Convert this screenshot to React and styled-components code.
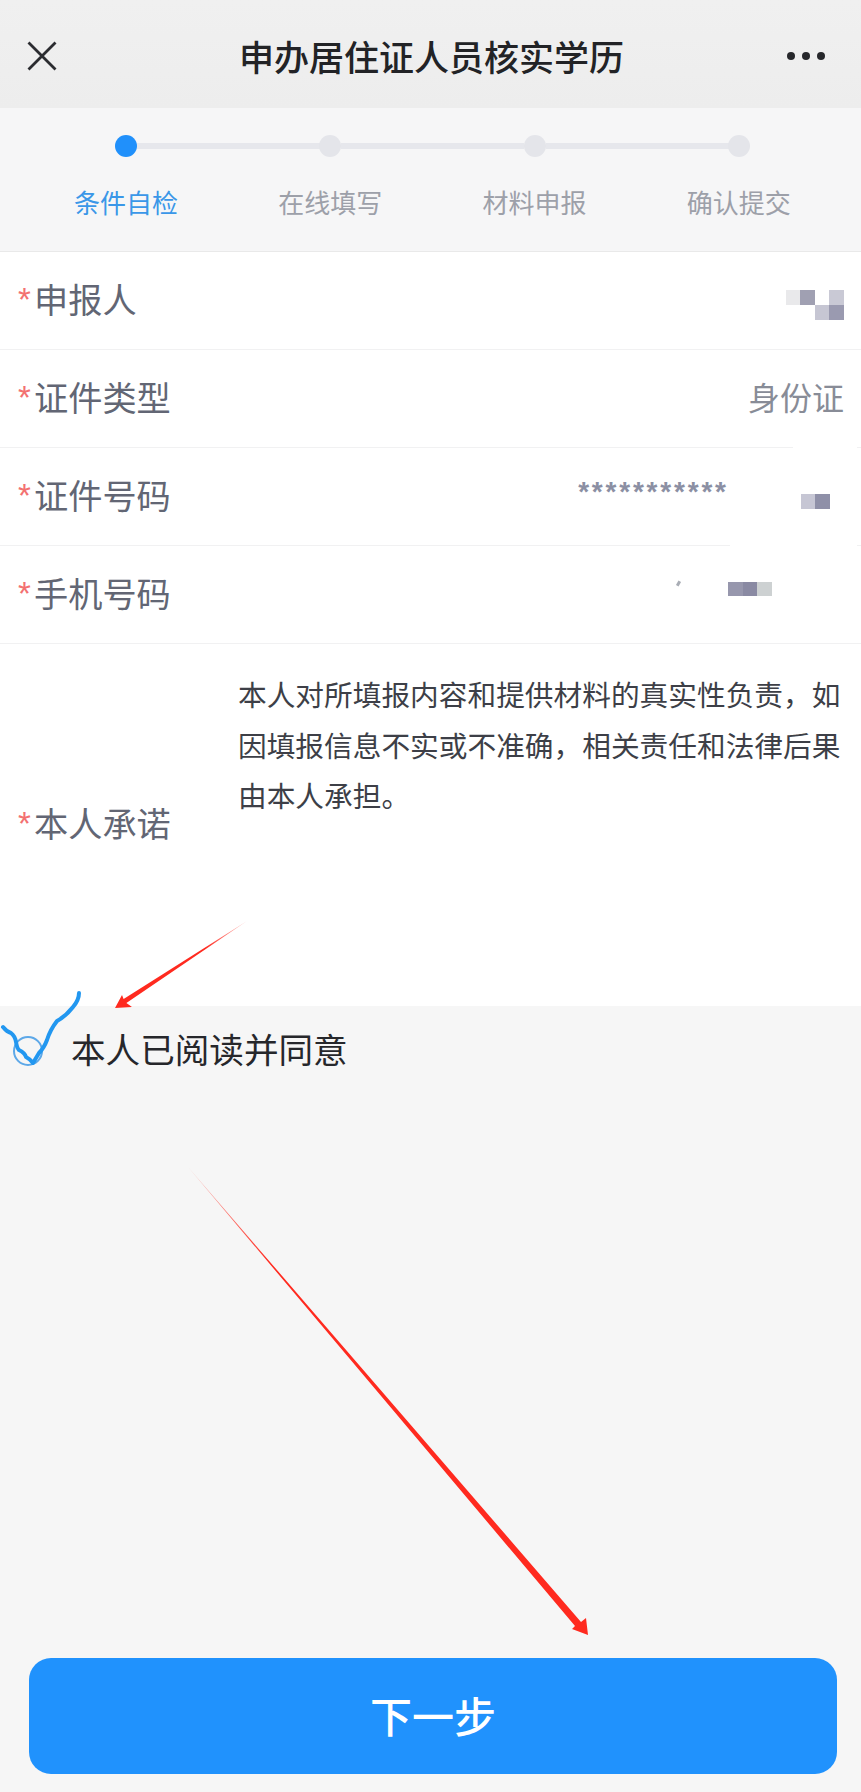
import React from 'react';
import styled, { createGlobalStyle } from 'styled-components';

const GlobalStyle = createGlobalStyle`
  html, body {
    margin: 0;
    padding: 0;
    background: #f6f6f6;
  }
  * {
    box-sizing: border-box;
  }
  body {
    font-family: "Noto Sans CJK SC", "Liberation Sans", sans-serif;
  }
`;

const Page = styled.div`
  position: relative;
  width: 861px;
  height: 1792px;
  display: flex;
  flex-direction: column;
  overflow: hidden;
  background: #f6f6f6;
`;

const Header = styled.header`
  height: 108px;
  display: flex;
  align-items: center;
  padding: 4px 36px 0 27px;
  background: linear-gradient(#f0f0f0, #ededed);
`;

const Title = styled.h1`
  margin: 0 0 1px 182px;
  font-size: 35px;
  font-weight: 500;
  line-height: 1;
  color: #222326;
`;

const MoreDots = styled.div`
  margin-left: auto;
  display: flex;
  gap: 7px;
  span {
    width: 8px;
    height: 8px;
    border-radius: 50%;
    background: #26272b;
  }
`;

const Steps = styled.section`
  height: 144px;
  padding: 27px 20px 0 24px;
  display: grid;
  grid-template-columns: repeat(4, 1fr);
  align-content: start;
  background: #f6f6f7;
  border-bottom: 1px solid #e9e9e9;
`;

const Step = styled.div`
  display: flex;
  flex-direction: column;
  align-items: center;
  gap: 27px;
  font-size: 26px;
  line-height: 36px;
  color: ${props => (props.$active ? '#3a97e8' : '#9da0a9')};
`;

const StepDot = styled.span`
  position: relative;
  width: 22px;
  height: 22px;
  border-radius: 50%;
  background: ${props => (props.$active ? '#2090fb' : '#e4e5ea')};

  /* line towards the next step */
  ${props => !props.$last && `
    &::after {
      content: '';
      position: absolute;
      left: 22px;
      top: 8px;
      width: 183px;
      height: 6px;
      background: #e6e7ec;
    }
  `}
`;

const Form = styled.section`
  background: #fff;
`;

const Row = styled.div`
  position: relative;
  height: 98px;
  display: flex;
  align-items: center;
  justify-content: space-between;
  padding: 0 17px 0 18px;
  border-bottom: 1px solid #f1f1f2;

  /* wiped part of the divider in the picture */
  ${props => props.$wipeFrom && `
    &::after {
      content: '';
      position: absolute;
      left: ${props.$wipeFrom}px;
      right: 4px;
      bottom: -1px;
      height: 1px;
      background: #fff;
    }
  `}
`;

const Label = styled.div`
  display: flex;
  align-items: center;
  margin-bottom: 6px;
  font-size: 34.2px;
  line-height: 46px;
  color: #626674;
`;

const Star = styled.span`
  width: 16px;
  font-family: "Liberation Sans", sans-serif;
  font-size: 33px;
  color: #f37171;
  transform: translateY(2px);
`;

const Value = styled.div`
  margin-bottom: 6px;
  font-size: 32px;
  color: #888c97;
`;

const MaskedValue = styled.div`
  display: flex;
  align-items: center;
  gap: ${props => props.$gap || 0}px;
  margin-right: ${props => props.$right || 0}px;
`;

const Stars = styled.span`
  margin-bottom: 10px;
  font-family: "Liberation Sans", sans-serif;
  font-size: 28px;
  font-weight: 700;
  line-height: 28px;
  letter-spacing: 2.8px;
  color: #8b8fa3;
`;

const Speck = styled.span`
  width: 3px;
  height: 5px;
  margin-bottom: 22px;
  background: #a9adb5;
  transform: rotate(30deg);
`;

const Mosaic = styled.div`
  display: grid;
  grid-template-columns: repeat(${props => props.$cols}, 14.6px);
  grid-auto-rows: 14.6px;
  margin: ${props => props.$margin || 0};
`;

const Cell = styled.span`
  background: ${props => props.$color};
`;

const PromiseRow = styled(Row)`
  height: 362px;
  border-bottom: none;
`;

const PromiseText = styled.p`
  align-self: flex-start;
  width: 606px;
  margin: 25px 0 0;
  font-size: 28.7px;
  line-height: 50.5px;
  color: #3d3f47;
`;

const AgreeRow = styled.label`
  display: flex;
  align-items: center;
  gap: 28px;
  padding: 19px 0 0 13px;
  font-size: 34.6px;
  line-height: 46px;
  color: #26272b;
`;

const Radio = styled.span`
  width: 30px;
  height: 30px;
  margin-top: 5px;
  border: 2px solid #5da8e8;
  border-radius: 50%;
`;

const NextButton = styled.button`
  height: 116px;
  margin: auto 24px 18px 29px;
  padding: 0 0 4px;
  border: none;
  border-radius: 22px;
  background: #2092fd;
  color: #fff;
  font-family: inherit;
  font-size: 42px;
  font-weight: 500;
`;

const Annotations = styled.svg`
  position: absolute;
  left: 0;
  top: 0;
  pointer-events: none;
`;

const formRows = [
  {
    label: '申报人',
    value: (
      <Mosaic $cols={4} $margin="9px 0 0 0">
        {['#e9e9eb', '#a0a0b2', '#fff', '#c9c9d5', '#fff', '#fff', '#c6c6d3', '#9a9ab0'].map((c, i) => (
          <Cell key={i} $color={c} />
        ))}
      </Mosaic>
    ),
  },
  { label: '证件类型', value: <Value>身份证</Value>, wipeFrom: 793 },
  {
    label: '证件号码',
    value: (
      <MaskedValue $gap={72} $right={14}>
        <Stars>***********</Stars>
        <Mosaic $cols={2} $margin="10px 0 0 0">
          <Cell $color="#c6c6d4" />
          <Cell $color="#8f90a8" />
        </Mosaic>
      </MaskedValue>
    ),
    wipeFrom: 730,
  },
  {
    label: '手机号码',
    value: (
      <MaskedValue $gap={48} $right={72}>
        <Speck />
        <Mosaic $cols={3} $margin="0 0 11px 0">
          <Cell $color="#9797ad" />
          <Cell $color="#8a8aa3" />
          <Cell $color="#cdd1d2" />
        </Mosaic>
      </MaskedValue>
    ),
  },
];

const steps = ['条件自检', '在线填写', '材料申报', '确认提交'];

const promiseText =
  '本人对所填报内容和提供材料的真实性负责\uFF0C如因填报信息不实或不准确\uFF0C相关责任和法律后果由本人承担。';

export default function App() {
  return (
    <Page>
      <GlobalStyle />
      <Header>
        <svg width="30" height="30" viewBox="0 0 30 30">
          <path d="M1.5 1.5 L28.5 28.5 M28.5 1.5 L1.5 28.5" stroke="#2b2c30" strokeWidth="2.8" fill="none" />
        </svg>
        <Title>申办居住证人员核实学历</Title>
        <MoreDots>
          <span />
          <span />
          <span />
        </MoreDots>
      </Header>

      <Steps>
        {steps.map((name, i) => (
          <Step key={name} $active={i === 0}>
            <StepDot $active={i === 0} $last={i === steps.length - 1} />
            {name}
          </Step>
        ))}
      </Steps>

      <Form>
        {formRows.map(row => (
          <Row key={row.label} $wipeFrom={row.wipeFrom}>
            <Label>
              <Star>*</Star>
              {row.label}
            </Label>
            {row.value}
          </Row>
        ))}
        <PromiseRow>
          <Label>
            <Star>*</Star>
            本人承诺
          </Label>
          <PromiseText>{promiseText}</PromiseText>
        </PromiseRow>
      </Form>

      <AgreeRow>
        <Radio />
        本人已阅读并同意
      </AgreeRow>

      <NextButton>下一步</NextButton>

      <Annotations width="861" height="1792" viewBox="0 0 861 1792">
        <defs>
          <linearGradient id="fadeLong" gradientUnits="userSpaceOnUse" x1="190" y1="1170" x2="270" y2="1263">
            <stop offset="0" stopColor="#ff2a1f" stopOpacity="0.3" />
            <stop offset="1" stopColor="#ff2a1f" />
          </linearGradient>
          <linearGradient id="fadeShort" gradientUnits="userSpaceOnUse" x1="245" y1="923" x2="205" y2="949">
            <stop offset="0" stopColor="#ff2a1f" stopOpacity="0.3" />
            <stop offset="1" stopColor="#ff2a1f" />
          </linearGradient>
        </defs>
        <polygon
          points="247,921 126.4,1003 132,1007 115,1008 122,995 123.6,998.9"
          fill="url(#fadeShort)"
        />
        <polygon
          points="188,1167 581,1622 586,1618 588,1635 572,1629 575,1626"
          fill="url(#fadeLong)"
        />
        <path
          d="M3 1027 Q7 1032 11 1033 Q15 1036 16 1042 Q17 1048 19 1050 Q25 1053 26 1057 Q30 1059 33 1063 Q36 1058 39 1053 Q44 1048 47 1040 Q50 1030 57 1021 Q66 1016 73 1007 Q79 1000 79 993"
          fill="none"
          stroke="#2297f0"
          strokeWidth="4"
          strokeLinecap="round"
          strokeLinejoin="round"
        />
      </Annotations>
    </Page>
  );
}
